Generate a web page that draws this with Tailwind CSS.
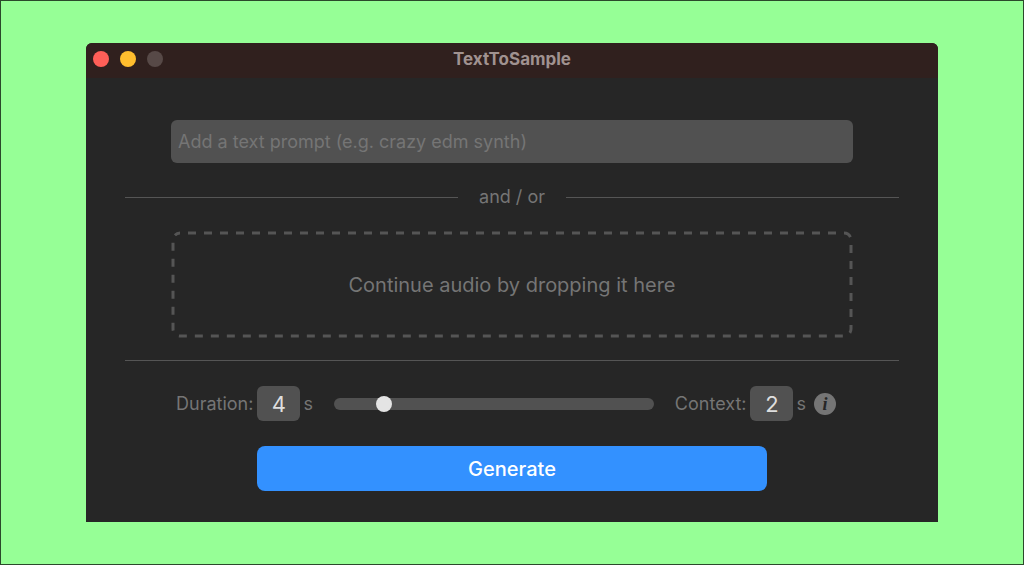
<!DOCTYPE html>
<html lang="en">
<head>
    <meta charset="UTF-8">
    <meta name="viewport" content="width=device-width, initial-scale=1.0">
    <title>TextToSample</title>
    <script src="https://cdn.jsdelivr.net/npm/@tailwindcss/browser@4"></script>
</head>
<body class="min-h-screen flex flex-col justify-center border border-[#2b4a2b] bg-[#96ff96] px-[85px] font-['Inter',sans-serif]">
    <main class="w-full overflow-hidden rounded-t-md bg-[#262626] text-[#757575]">
        <!-- Title bar -->
        <header class="grid grid-cols-3 items-center h-[35px] px-[7px] pb-1 bg-[#30201e]">
            <div class="flex gap-[11px]">
                <button type="button" aria-label="Close" class="size-4 rounded-full bg-[#ff5f58]"></button>
                <button type="button" aria-label="Minimize" class="size-4 rounded-full bg-[#ffbd2e]"></button>
                <button type="button" aria-label="Zoom" disabled class="size-4 rounded-full bg-[#574947]"></button>
            </div>
            <h1 class="text-center text-[17px] leading-6 font-bold text-[#a09290]">TextToSample</h1>
        </header>

        <form class="px-[39px] pt-[42px] pb-[31px]">
            <div class="px-[46px]">
                <input type="text" aria-label="Text prompt" placeholder="Add a text prompt (e.g. crazy edm synth)" class="block w-full h-[43px] rounded-md bg-[#515151] px-[7px] text-lg text-[#dedede] placeholder:text-[#757575] focus:outline-none">
            </div>

            <div class="flex items-center gap-[21px] my-5">
                <hr class="flex-1 border-[#555555]">
                <span class="text-lg">and / or</span>
                <hr class="flex-1 border-[#555555]">
            </div>

            <!-- Drop zone -->
            <div class="px-[46px]">
                <div class="relative flex items-center justify-center h-[107px] p-[2px]">
                    <svg class="absolute inset-[2px] w-[calc(100%-4px)] h-[calc(100%-4px)] overflow-visible" fill="none" aria-hidden="true">
                        <rect width="100%" height="100%" rx="7" stroke="#555555" stroke-width="3" stroke-dasharray="8 8" stroke-dashoffset="8"/>
                    </svg>
                    <p class="text-xl">Continue audio by dropping it here</p>
                </div>
            </div>

            <hr class="mt-[22px] mb-[25px] border-[#555555]">

            <div class="flex items-center pl-[51px] pr-[63px] text-lg">
                <label for="duration">Duration:</label>
                <input type="text" id="duration" value="4" class="w-[43px] h-[35px] ml-1 mr-[3px] rounded-md bg-[#515151] text-center text-[22px] text-[#dedede] focus:outline-none">
                <span>s</span>
                <input type="range" aria-label="Duration in seconds" min="0" max="29" value="4" class="flex-1 min-w-0 h-3 mx-[21px] appearance-none rounded-full bg-[#515151] [&::-webkit-slider-thumb]:appearance-none [&::-webkit-slider-thumb]:size-4 [&::-webkit-slider-thumb]:rounded-full [&::-webkit-slider-thumb]:bg-[#e4e4e4]">
                <label for="context">Context:</label>
                <input type="text" id="context" value="2" class="w-[43px] h-[35px] ml-1 mr-[3px] rounded-md bg-[#515151] text-center text-[22px] text-[#dedede] focus:outline-none">
                <span>s</span>
                <button type="button" aria-label="About context" class="flex items-center justify-center size-[22px] ml-2 rounded-full bg-[#757575] font-['Liberation_Serif',serif] text-lg leading-none font-bold italic text-[#262626]">i</button>
            </div>

            <button type="submit" class="block w-[66%] h-[45px] mx-auto mt-[25px] rounded-lg bg-[#3391ff] text-xl font-medium text-white">Generate</button>
        </form>
    </main>
</body>
</html>
